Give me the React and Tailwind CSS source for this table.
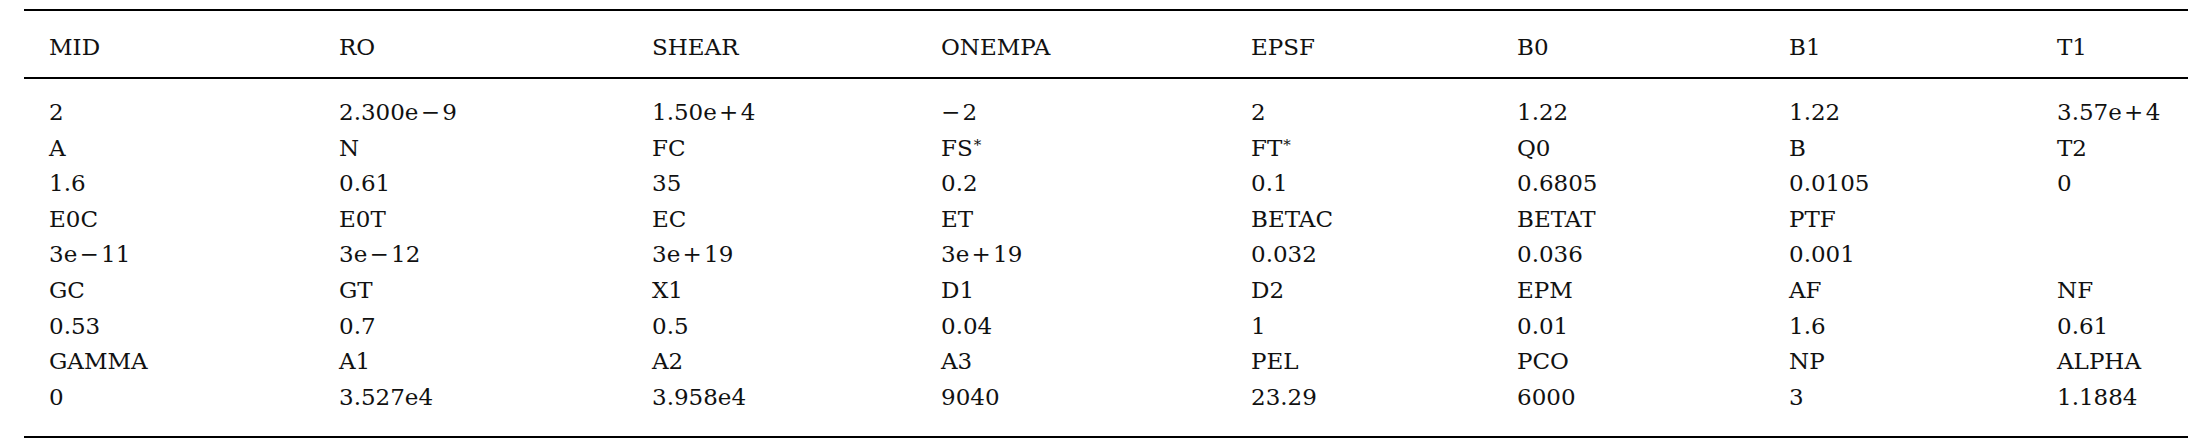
import React from 'react';

const headers = ['MID', 'RO', 'SHEAR', 'ONEMPA', 'EPSF', 'B0', 'B1', 'T1'];

const Star = ({ children }) => (
  <>
    {children}
    <sup className="relative -top-[6px] ml-[1px] text-[15px] leading-none">*</sup>
  </>
);

const rows = [
  ['2', '2.300e\u200a−\u200a9', '1.50e\u200a+\u200a4', '−\u200a2', '2', '1.22', '1.22', '3.57e\u200a+\u200a4'],
  ['A', 'N', 'FC', <Star key="fs">FS</Star>, <Star key="ft">FT</Star>, 'Q0', 'B', 'T2'],
  ['1.6', '0.61', '35', '0.2', '0.1', '0.6805', '0.0105', '0'],
  ['E0C', 'E0T', 'EC', 'ET', 'BETAC', 'BETAT', 'PTF', ''],
  ['3e\u200a−\u200a11', '3e\u200a−\u200a12', '3e\u200a+\u200a19', '3e\u200a+\u200a19', '0.032', '0.036', '0.001', ''],
  ['GC', 'GT', 'X1', 'D1', 'D2', 'EPM', 'AF', 'NF'],
  ['0.53', '0.7', '0.5', '0.04', '1', '0.01', '1.6', '0.61'],
  ['GAMMA', 'A1', 'A2', 'A3', 'PEL', 'PCO', 'NP', 'ALPHA'],
  ['0', '3.527e4', '3.958e4', '9040', '23.29', '6000', '3', '1.1884'],
];

// column widths measured off the picture
const widths = ['w-[290px]', 'w-[313px]', 'w-[289px]', 'w-[310px]', 'w-[266px]', 'w-[272px]', 'w-[268px]', 'w-[156px]'];

export default function App() {
  const last = rows.length - 1;
  return (
    <div className="h-[442px] w-[2205px] bg-white pt-[9px] font-['DejaVu_Serif',serif] text-[23px] text-[#111]">
      <table className="ml-[24px] w-[2164px] table-fixed border-collapse">
        <colgroup>
          {widths.map((w, i) => (
            <col key={i} className={w} />
          ))}
        </colgroup>
        <thead>
          <tr className="border-t-2 border-b-2 border-black">
            {headers.map((h) => (
              <th key={h} className="h-[68px] pl-[25px] pt-[6px] text-left align-middle font-normal">
                {h}
              </th>
            ))}
          </tr>
        </thead>
        <tbody className="border-b-2 border-black">
          {rows.map((r, i) => (
            <tr key={i}>
              {r.map((c, j) => (
                <td
                  key={j}
                  className={`pl-[25px] leading-[35.6px] whitespace-nowrap ${i === 0 ? 'pt-[16px]' : ''} ${i === last ? 'pb-[21px]' : ''}`}
                >
                  {c}
                </td>
              ))}
            </tr>
          ))}
        </tbody>
      </table>
    </div>
  );
}
